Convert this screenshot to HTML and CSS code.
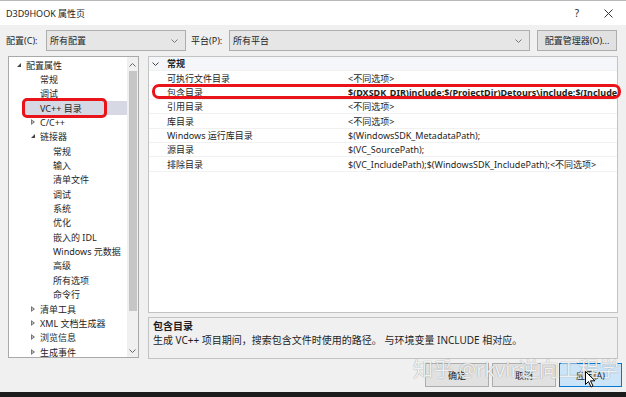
FILE: index.html
```html
<!DOCTYPE html>
<html lang="zh-CN">
<head>
    <meta charset="UTF-8">
    <meta name="viewport" content="width=device-width, initial-scale=1.0">
    <title>D3D9HOOK 属性页</title>
    <link rel="stylesheet" href="styles.css">
</head>
<body>
    <div class="dialog">
        <div class="titlebar">
            <span class="title">D3D9HOOK 属性页</span>
            <span class="help">?</span>
            <span class="close">
                <svg width="9" height="9" viewBox="0 0 9 9"><path d="M0.5 0.5L8.5 8.5M8.5 0.5L0.5 8.5" stroke="#333" stroke-width="1"/></svg>
            </span>
        </div>

        <div class="config-row">
            <label class="lbl">配置(C):</label>
            <div class="combo combo-config">
                <span>所有配置</span>
                <svg class="chev" width="7" height="4" viewBox="0 0 7 4"><path d="M0.5 0.5L3.5 3.5L6.5 0.5" fill="none" stroke="#777"/></svg>
            </div>
            <label class="lbl lbl-platform">平台(P):</label>
            <div class="combo combo-platform">
                <span>所有平台</span>
                <svg class="chev" width="7" height="4" viewBox="0 0 7 4"><path d="M0.5 0.5L3.5 3.5L6.5 0.5" fill="none" stroke="#777"/></svg>
            </div>
            <button class="btn btn-manager">配置管理器(O)...</button>
        </div>

        <div class="main">
            <div class="tree">
                <div class="tree-items">
                    <div class="node lvl0"><span class="tw open"></span>配置属性</div>
                    <div class="node lvl1"><span class="tw"></span>常规</div>
                    <div class="node lvl1"><span class="tw"></span>调试</div>
                    <div class="node lvl1 sel"><span class="tw"></span>VC++ 目录<span class="mark mark-tree"></span></div>
                    <div class="node lvl1"><span class="tw shut"></span>C/C++</div>
                    <div class="node lvl1"><span class="tw open"></span>链接器</div>
                    <div class="node lvl2">常规</div>
                    <div class="node lvl2">输入</div>
                    <div class="node lvl2">清单文件</div>
                    <div class="node lvl2">调试</div>
                    <div class="node lvl2">系统</div>
                    <div class="node lvl2">优化</div>
                    <div class="node lvl2">嵌入的 IDL</div>
                    <div class="node lvl2">Windows 元数据</div>
                    <div class="node lvl2">高级</div>
                    <div class="node lvl2">所有选项</div>
                    <div class="node lvl2">命令行</div>
                    <div class="node lvl1"><span class="tw shut"></span>清单工具</div>
                    <div class="node lvl1"><span class="tw shut"></span>XML 文档生成器</div>
                    <div class="node lvl1"><span class="tw shut"></span>浏览信息</div>
                    <div class="node lvl1"><span class="tw shut"></span>生成事件</div>
                </div>
                <div class="scrollbar">
                    <svg class="arrow" width="7" height="4" viewBox="0 0 7 4"><path d="M0.5 3.5L3.5 0.5L6.5 3.5" fill="none" stroke="#666"/></svg>
                    <div class="thumb"></div>
                    <svg class="arrow" width="7" height="4" viewBox="0 0 7 4"><path d="M0.5 0.5L3.5 3.5L6.5 0.5" fill="none" stroke="#666"/></svg>
                </div>
            </div>

            <div class="right">
                <div class="grid">
                    <div class="row head">
                        <svg class="head-chev" width="7" height="4" viewBox="0 0 7 4"><path d="M0.5 0.5L3.5 3.5L6.5 0.5" fill="none" stroke="#444"/></svg>
                        <span class="name">常规</span>
                    </div>
                    <div class="row"><span class="name">可执行文件目录</span><span class="value">&lt;不同选项&gt;</span></div>
                    <div class="row strong"><span class="name">包含目录</span><span class="value">$(DXSDK_DIR)include;$(ProjectDir)Detours\include;$(Include)</span><span class="mark mark-grid"></span></div>
                    <div class="row"><span class="name">引用目录</span><span class="value">&lt;不同选项&gt;</span></div>
                    <div class="row"><span class="name">库目录</span><span class="value">&lt;不同选项&gt;</span></div>
                    <div class="row"><span class="name">Windows 运行库目录</span><span class="value">$(WindowsSDK_MetadataPath);</span></div>
                    <div class="row"><span class="name">源目录</span><span class="value">$(VC_SourcePath);</span></div>
                    <div class="row"><span class="name">排除目录</span><span class="value">$(VC_IncludePath);$(WindowsSDK_IncludePath);&lt;不同选项&gt;</span></div>
                </div>
                <div class="desc">
                    <div class="desc-title">包含目录</div>
                    <div>生成 VC++ 项目期间，搜索包含文件时使用的路径。 与环境变量 INCLUDE 相对应。</div>
                </div>
            </div>
        </div>

        <div class="footer">
            <button class="btn btn-foot">确定</button>
            <button class="btn btn-foot">取消</button>
            <button class="btn btn-foot btn-apply">应用(A)</button>
            <span class="watermark">知乎 @rkvir逆向工程学</span>
            <svg class="cursor" width="11" height="17" viewBox="0 0 11 17"><path d="M0.5 0.5L0.5 13.5L3.5 10.5L6 16L8 15L5.5 9.8L10 9.8Z" fill="#fff" stroke="#000" stroke-width="1" stroke-linejoin="round"/></svg>
        </div>
    </div>
</body>
</html>
```

FILE: styles.css
```css
body {
    margin: 0;
    padding: 0;
    background-color: #1c1c1c;
    font-family: "Noto Sans", "Noto Sans CJK SC", sans-serif;
    font-size: 9px;
    color: #1e1e1e;
}
.dialog {
    position: relative;
    width: 626px;
    height: 392px;
    background-color: #f0f0f0;
    display: flex;
    flex-direction: column;
}
.titlebar {
    height: 25px;
    box-sizing: border-box;
    border-top: 1px solid #b9b9b9;
    background: #ffffff;
    display: flex;
    align-items: center;
    padding-left: 6px;
}
.title {
    flex: 1;
}
.help {
    width: 12px;
    text-align: center;
    margin-right: 19px;
    font-size: 10px;
}
.close {
    width: 12px;
    margin-right: 12px;
    display: flex;
    justify-content: center;
}
/* config row */
.config-row {
    margin-top: 5px;
    height: 21px;
    display: flex;
    align-items: center;
    padding-left: 6px;
}
.lbl {
    width: 40px;
}
.lbl-platform {
    margin-left: 5px;
    width: 38px;
}
.combo {
    height: 21px;
    box-sizing: border-box;
    border: 1px solid #adadad;
    background: #e6e6e6;
    display: flex;
    align-items: center;
    justify-content: space-between;
    padding: 0 7px 0 3px;
}
.combo-config {
    width: 140px;
}
.combo-platform {
    width: 301px;
}
.btn {
    font-family: inherit;
    font-size: 9px;
    color: #1e1e1e;
    background: #e1e1e1;
    border: 1px solid #adadad;
    padding: 0;
    box-sizing: border-box;
}
.btn-manager {
    margin-left: 7px;
    width: 80px;
    height: 21px;
}
/* main area */
.main {
    margin-top: 5px;
    height: 303px;
    display: flex;
    padding-left: 8px;
    gap: 9px;
}
.tree {
    width: 131px;
    height: 302px;
    box-sizing: border-box;
    border: 1px solid #a9a9a9;
    background: #ffffff;
    display: flex;
}
.tree-items {
    width: 118px;
    padding-top: 1px;
}
.node {
    position: relative;
    height: 14.35px;
    display: flex;
    align-items: center;
    white-space: nowrap;
}
.lvl0 {
    padding-left: 5px;
}
.lvl1 {
    padding-left: 19px;
}
.lvl2 {
    padding-left: 44px;
}
.node.sel {
    margin-left: 13px;
    padding-left: 6px;
    background: #d6d9e4;
}
.tw {
    width: 9px;
    height: 9px;
    margin-right: 3px;
    position: relative;
}
.tw.open::after {
    content: "";
    position: absolute;
    left: 3px;
    top: 2px;
    border-style: solid;
    border-width: 0 0 4px 4px;
    border-color: transparent transparent #444 transparent;
}
.tw.shut::after {
    content: "";
    position: absolute;
    left: 3px;
    top: 1px;
    width: 0;
    height: 0;
    border-style: solid;
    border-width: 3.5px 0 3.5px 4px;
    border-color: transparent transparent transparent #777;
}
.tw.shut::before {
    content: "";
    position: absolute;
    left: 4px;
    top: 3px;
    border-style: solid;
    border-width: 1.5px 0 1.5px 1.8px;
    border-color: transparent transparent transparent #fff;
    z-index: 1;
}
.scrollbar {
    width: 11px;
    background: #f0f0f0;
    display: flex;
    flex-direction: column;
    align-items: center;
    padding: 6px 0 4px;
    box-sizing: border-box;
}
.thumb {
    width: 8px;
    flex: 1;
    background: #c6c6c6;
    margin: 4px 0 38px;
}
.arrow {
    flex: none;
}
/* right side */
.right {
    width: 470px;
    display: flex;
    flex-direction: column;
    gap: 4px;
}
.grid {
    height: 257px;
    box-sizing: border-box;
    border: 1px solid #c3c3c3;
    background: #ffffff;
}
.row {
    position: relative;
    height: 14.35px;
    display: flex;
    align-items: center;
    border-bottom: 1px solid #f1f1f1;
    box-sizing: border-box;
    white-space: nowrap;
}
.row .name {
    width: 181px;
    padding-left: 18px;
    flex: none;
}
.row .value {
    overflow: hidden;
    flex: 1;
}
.row.head {
    background: #f4f6fa;
    font-weight: bold;
}
.head-chev {
    position: absolute;
    left: 3px;
    top: 5px;
}
.row.strong .value {
    font-weight: bold;
}
.mark {
    position: absolute;
    border: 3px solid #e8141a;
    box-sizing: border-box;
}
.mark-tree {
    left: 0;
    top: -3px;
    width: 85px;
    height: 20px;
    border-radius: 5px;
}
.mark-grid {
    left: 3px;
    right: -4px;
    top: -2px;
    height: 15px;
    border-radius: 7px;
}
.desc {
    flex: 1;
    box-sizing: border-box;
    border: 1px solid #c3c3c3;
    padding: 1px 4px;
    font-size: 10px;
    line-height: 14px;
}
.desc-title {
    font-weight: bold;
}
/* footer */
.footer {
    position: relative;
    flex: 1;
    display: flex;
    justify-content: flex-end;
    align-items: flex-start;
    padding: 4px 4px 0 0;
    gap: 3px;
}
.btn-foot {
    width: 64px;
    height: 24px;
}
.btn-apply {
    background: #cce4f7;
    border-color: #0078d7;
    width: 63px;
}
.watermark {
    position: absolute;
    left: 413px;
    top: -2px;
    font-size: 20px;
    line-height: 26px;
    color: rgba(255, 255, 255, 0.88);
    text-shadow: 0 0 1px rgba(0, 0, 0, 0.45);
    white-space: nowrap;
}
.cursor {
    position: absolute;
    left: 585px;
    top: 12px;
}
```
